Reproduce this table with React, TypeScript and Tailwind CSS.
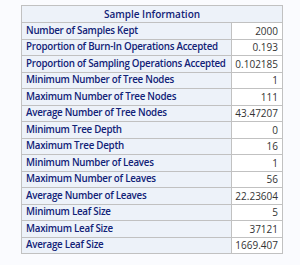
const rows: [string, string][] = [
  ["Number of Samples Kept", "2000"],
  ["Proportion of Burn-In Operations Accepted", "0.193"],
  ["Proportion of Sampling Operations Accepted", "0.102185"],
  ["Minimum Number of Tree Nodes", "1"],
  ["Maximum Number of Tree Nodes", "111"],
  ["Average Number of Tree Nodes", "43.47207"],
  ["Minimum Tree Depth", "0"],
  ["Maximum Tree Depth", "16"],
  ["Minimum Number of Leaves", "1"],
  ["Maximum Number of Leaves", "56"],
  ["Average Number of Leaves", "22.23604"],
  ["Minimum Leaf Size", "5"],
  ["Maximum Leaf Size", "37121"],
  ["Average Leaf Size", "1669.407"],
];

export default function App() {
  return (
    <div className="w-[300px] h-[265px] bg-[#fafbfe] pt-[5px] pl-[21px] font-['Open_Sans',sans-serif] text-[10px]">
      <table className="border-collapse w-[261px] border border-[#c1c1c1] table-fixed">
        <colgroup>
          <col className="w-[210px]" />
          <col className="w-[51px]" />
        </colgroup>
        <thead>
          <tr className="h-[17px]">
            <th
              colSpan={2}
              className="bg-[#edf2f9] text-[#112277] font-semibold text-center border border-[#c1c1c1] p-0 leading-none"
            >
              Sample Information
            </th>
          </tr>
        </thead>
        <tbody>
          {rows.map(([label, value]) => (
            <tr key={label} className="h-[16.5px]">
              <th className="bg-[#edf2f9] text-[#112277] text-[9.75px] font-semibold tracking-[-0.25px] text-left border border-[#c1c1c1] pl-[4px] pr-0 py-0 leading-none whitespace-nowrap overflow-hidden">
                {label}
              </th>
              <td className="bg-white text-[#333333] text-right border border-[#c1c1c1] pr-[4px] pl-0 py-0 leading-none">
                {value}
              </td>
            </tr>
          ))}
        </tbody>
      </table>
    </div>
  );
}
